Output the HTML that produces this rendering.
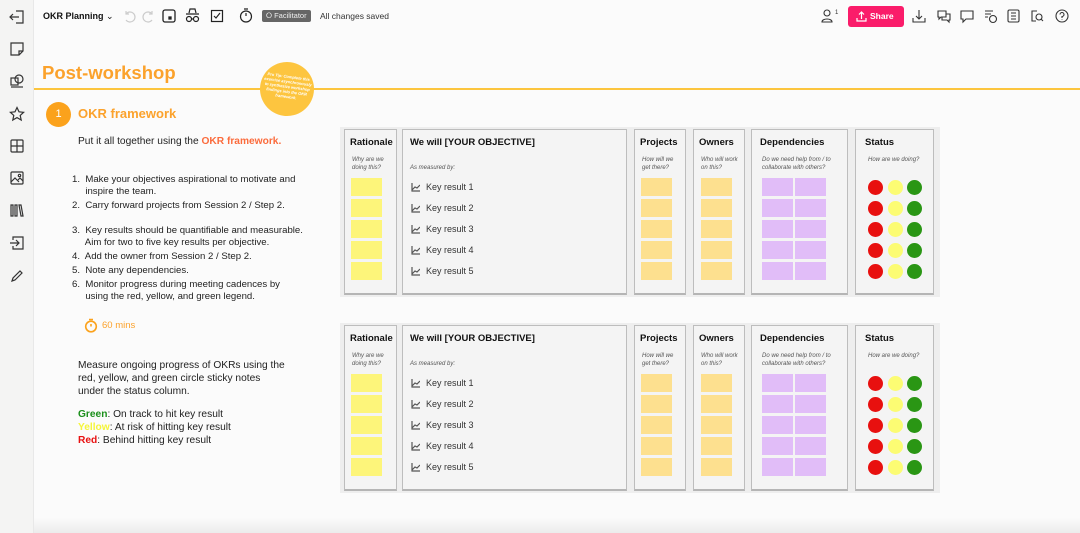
<!DOCTYPE html>
<html><head><meta charset="utf-8"><style>
*{margin:0;padding:0;box-sizing:border-box}
body{width:1080px;height:533px;overflow:hidden;background:#fbfbfb;font-family:"Liberation Sans",sans-serif;color:#222;position:relative}
.a{position:absolute}
.side{left:0;top:0;width:34px;height:533px;background:#f4f4f3;border-right:1px solid #e8e8e8}
.side svg{position:absolute;left:9px}
.board{position:absolute;left:340px;width:600px;height:170px;background:#eeeeee}
.col{position:absolute;top:2px;height:166px;background:#f4f4f4;border:1px solid #bdbdbd;border-bottom:2px solid #b5b5b5}
.col h4{position:absolute;left:5px;top:7px;font-size:9.5px;font-weight:bold;color:#111;white-space:nowrap}
.col i{position:absolute;left:7px;top:26px;font-size:6px;line-height:8px;color:#555}
.st{position:absolute;width:31px;height:18px}
.y{background:#fdf57a}.o{background:#fde08f}.p{background:#e1bdf8}
.c{position:absolute;width:15px;height:15px;border-radius:50%}
.kr{position:absolute;left:8px;font-size:9px;color:#333;white-space:nowrap}
.kr svg{vertical-align:-2px;margin-right:6px}
.txt{font-size:9.6px;line-height:12px;color:#222}
</style></head><body>
<div class="a side">
<svg style="top:9px" width="16" height="16" viewBox="0 0 16 16" fill="none" stroke="#333" stroke-width="1.2"><path d="M7 2h7v12H7M1 8h9M4 5L1 8l3 3"/></svg>
<svg style="top:41px" width="16" height="16" viewBox="0 0 16 16" fill="none" stroke="#333" stroke-width="1.2"><path d="M2 2h12v8l-4 4H2z M10 14v-4h4"/></svg>
<svg style="top:73px" width="16" height="16" viewBox="0 0 16 16" fill="none" stroke="#333" stroke-width="1.2"><rect x="2" y="5" width="7" height="7"/><circle cx="10" cy="6" r="4"/><path d="M2 14h12"/></svg>
<svg style="top:106px" width="16" height="16" viewBox="0 0 16 16" fill="none" stroke="#333" stroke-width="1.2"><path d="M8 1.5l2 4.3 4.6.5-3.4 3.1 1 4.6L8 11.6 3.8 14l1-4.6L1.4 6.3 6 5.8z"/></svg>
<svg style="top:138px" width="16" height="16" viewBox="0 0 16 16" fill="none" stroke="#333" stroke-width="1.2"><rect x="2" y="2" width="12" height="12" rx="1"/><path d="M8 2v12M2 8h12"/></svg>
<svg style="top:170px" width="16" height="16" viewBox="0 0 16 16" fill="none" stroke="#333" stroke-width="1.2"><rect x="2" y="2" width="12" height="12" rx="1"/><path d="M2 12l4-4 4 4M9 10l2-2 3 3"/><circle cx="10.5" cy="5.5" r="1.2"/></svg>
<svg style="top:202px" width="16" height="16" viewBox="0 0 16 16" fill="none" stroke="#333" stroke-width="1.2"><path d="M2 3h2v11H2zM6 3h2v11H6zM10 3l2 0 2 11h-2z"/></svg>
<svg style="top:235px" width="16" height="16" viewBox="0 0 16 16" fill="none" stroke="#333" stroke-width="1.2"><path d="M4 5V2h10v12H4v-3M1 8h9M7 5l3 3-3 3"/></svg>
<svg style="top:268px" width="16" height="16" viewBox="0 0 16 16" fill="none" stroke="#333" stroke-width="1.2"><path d="M3 13l1-3 7-7 2 2-7 7z"/></svg>
</div>
<!-- top bar -->
<div class="a" style="left:43px;top:11px;font-size:9px;font-weight:bold;color:#111">OKR Planning <span style="font-weight:normal">⌄</span></div>
<svg class="a" style="left:122px;top:10px" width="34" height="14" viewBox="0 0 34 14" fill="none" stroke="#ccc" stroke-width="1.2"><path d="M4 4a5 5 0 1 1 0 6M4 1v3h3M30 4a5 5 0 1 0 0 6M30 1v3h-3"/></svg>
<svg class="a" style="left:162px;top:9px" width="14" height="14" viewBox="0 0 14 14" fill="none" stroke="#222" stroke-width="1.3"><rect x="1" y="1" width="12" height="12" rx="2"/><rect x="7" y="8" width="2" height="2" fill="#222"/></svg>
<svg class="a" style="left:185px;top:8px" width="15" height="15" viewBox="0 0 15 15" fill="none" stroke="#222" stroke-width="1.2"><path d="M4 5l1-4h5l1 4M1 6h13"/><circle cx="4" cy="11" r="2.5"/><circle cx="11" cy="11" r="2.5"/><path d="M6.5 11h2"/></svg>
<svg class="a" style="left:210px;top:9px" width="14" height="14" viewBox="0 0 14 14" fill="none" stroke="#222" stroke-width="1.2"><rect x="1.5" y="1.5" width="11" height="11"/><path d="M4 7l2 2 4-5"/></svg>
<svg class="a" style="left:239px;top:8px" width="14" height="15" viewBox="0 0 14 15" fill="none" stroke="#222" stroke-width="1.2"><circle cx="7" cy="8.5" r="5.5"/><path d="M5 1h4M7 5v3"/></svg>
<div class="a" style="left:262px;top:10px;width:49px;height:12px;background:#666;border-radius:2px;color:#eee;font-size:7.5px;line-height:12px;padding-left:4px">⭘ Facilitator</div>
<div class="a" style="left:320px;top:11px;font-size:8.5px;color:#333">All changes saved</div>
<svg class="a" style="left:821px;top:9px" width="16" height="14" viewBox="0 0 16 14" fill="none" stroke="#333" stroke-width="1.1"><circle cx="6" cy="4" r="3"/><path d="M1 13c0-4 10-4 10 0z"/></svg>
<div class="a" style="left:835px;top:10px;font-size:6px;color:#333">1</div>
<div class="a" style="left:848px;top:6px;width:56px;height:21px;background:#fa1c6a;border-radius:3px;color:#fff;font-size:8.5px;font-weight:bold;line-height:21px;padding-left:22px">Share</div>
<svg class="a" style="left:856px;top:11px" width="11" height="11" viewBox="0 0 11 11" fill="none" stroke="#fff" stroke-width="1.2"><path d="M1 7v3h9V7M5.5 8V1M3 3.5l2.5-2.5 2.5 2.5"/></svg>
<svg class="a" style="left:912px;top:8px" width="160" height="16" viewBox="0 0 160 16" fill="none" stroke="#333" stroke-width="1.1">
<path d="M1 10v4h12v-4M7 2v9M4 8l3 3 3-3"/>
<path d="M26 3h8v6h-5l-2 2V9h-1zM30 9v3h5l2 2v-2h1V6h-4"/>
<path d="M49 3h12v8h-7l-3 3v-3h-2z"/>
<path d="M73 3h8M73 6h6M73 9h3"/><circle cx="81" cy="11" r="3.5"/>
<rect x="96" y="2" width="11" height="12" rx="1.5"/><path d="M99 5h5M99 8h5M99 11h5"/>
<path d="M125 3h-5v10h4"/><circle cx="127" cy="9" r="3"/><path d="M129 11l2 2"/>
<circle cx="150" cy="8" r="6"/><path d="M148 6.5a2 2 0 1 1 2 2v1.5M150 11.5v.5"/>
</svg>
<!-- header -->
<div class="a" style="left:42px;top:62px;font-size:18.5px;font-weight:bold;color:#fba22c">Post-workshop</div>
<div class="a" style="left:34px;top:88px;width:1046px;height:1.5px;background:#fcc53e"></div>
<div class="a" style="left:260px;top:62px;width:54px;height:54px;border-radius:50%;background:#fdc53f;color:#fff;font-size:4px;line-height:5px;text-align:center;padding-top:12px;font-style:italic;font-weight:bold;transform:rotate(8deg)">Pro Tip: Complete this<br>exercise asynchronously<br>to synthesize workshop<br>findings into the OKR<br>framework.</div>
<div class="a" style="left:46px;top:102px;width:25px;height:25px;border-radius:50%;background:#fba21c;color:#fff;font-size:11px;text-align:center;line-height:25px">1</div>
<div class="a" style="left:78px;top:106px;font-size:13px;font-weight:bold;color:#fba22c">OKR framework</div>
<div class="a txt" style="left:78px;top:136px;font-size:10.2px">Put it all together using the <b style="color:#fb6b3c">OKR framework.</b></div>
<div class="a txt" style="left:72px;top:174px;width:260px;font-size:9.6px">
<div>1.&nbsp; Make your objectives aspirational to motivate and<br>&nbsp;&nbsp;&nbsp;&nbsp; inspire the team.</div>
<div style="margin-top:2px">2.&nbsp; Carry forward projects from Session 2 / Step 2.</div>
<div style="margin-top:13px">3.&nbsp; Key results should be quantifiable and measurable.<br>&nbsp;&nbsp;&nbsp;&nbsp; Aim for two to five key results per objective.</div>
<div style="margin-top:2px">4.&nbsp; Add the owner from Session 2 / Step 2.</div>
<div style="margin-top:2px">5.&nbsp; Note any dependencies.</div>
<div style="margin-top:2px">6.&nbsp; Monitor progress during meeting cadences by<br>&nbsp;&nbsp;&nbsp;&nbsp; using the red, yellow, and green legend.</div>
</div>
<svg class="a" style="left:84px;top:318px" width="14" height="15" viewBox="0 0 14 15" fill="none" stroke="#fba21c" stroke-width="1.6"><circle cx="7" cy="8.5" r="5.3"/><path d="M5 1.5h4M7 6v2.5"/></svg>
<div class="a" style="left:102px;top:320px;font-size:9.5px;color:#fba22c">60 mins</div>
<div class="a txt" style="left:78px;top:359px;line-height:13px;font-size:10.2px">Measure ongoing progress of OKRs using the<br>red, yellow, and green circle sticky notes<br>under the status column.</div>
<div class="a txt" style="left:78px;top:409px;line-height:12.8px;font-size:10.2px"><b style="color:#1b8f1b">Green</b>: On track to hit key result<br><b style="color:#f5f53a">Yellow</b>: At risk of hitting key result<br><b style="color:#e81010">Red</b>: Behind hitting key result</div>

<!-- boards -->
<div class="board" style="top:127px">
 <div class="col" style="left:4px;width:53px"><h4>Rationale</h4><i>Why are we<br>doing this?</i>
  <div class="st y" style="left:6px;top:48px"></div><div class="st y" style="left:6px;top:69px"></div><div class="st y" style="left:6px;top:90px"></div><div class="st y" style="left:6px;top:111px"></div><div class="st y" style="left:6px;top:132px"></div></div>
 <div class="col" style="left:62px;width:225px"><h4 style="left:7px">We will [YOUR OBJECTIVE]</h4><i style="top:34px">As measured by:</i>
  <div class="kr" style="top:52px"><svg width="9" height="9" viewBox="0 0 9 9" fill="none" stroke="#555" stroke-width="1.2"><path d="M1 0v8h8M1 7l3-3 2 1 3-3"/></svg>Key result 1</div>
  <div class="kr" style="top:73px"><svg width="9" height="9" viewBox="0 0 9 9" fill="none" stroke="#555" stroke-width="1.2"><path d="M1 0v8h8M1 7l3-3 2 1 3-3"/></svg>Key result 2</div>
  <div class="kr" style="top:94px"><svg width="9" height="9" viewBox="0 0 9 9" fill="none" stroke="#555" stroke-width="1.2"><path d="M1 0v8h8M1 7l3-3 2 1 3-3"/></svg>Key result 3</div>
  <div class="kr" style="top:115px"><svg width="9" height="9" viewBox="0 0 9 9" fill="none" stroke="#555" stroke-width="1.2"><path d="M1 0v8h8M1 7l3-3 2 1 3-3"/></svg>Key result 4</div>
  <div class="kr" style="top:136px"><svg width="9" height="9" viewBox="0 0 9 9" fill="none" stroke="#555" stroke-width="1.2"><path d="M1 0v8h8M1 7l3-3 2 1 3-3"/></svg>Key result 5</div></div>
 <div class="col" style="left:294px;width:52px"><h4>Projects</h4><i>How will we<br>get there?</i>
  <div class="st o" style="left:6px;top:48px"></div><div class="st o" style="left:6px;top:69px"></div><div class="st o" style="left:6px;top:90px"></div><div class="st o" style="left:6px;top:111px"></div><div class="st o" style="left:6px;top:132px"></div></div>
 <div class="col" style="left:353px;width:52px"><h4>Owners</h4><i>Who will work<br>on this?</i>
  <div class="st o" style="left:7px;top:48px"></div><div class="st o" style="left:7px;top:69px"></div><div class="st o" style="left:7px;top:90px"></div><div class="st o" style="left:7px;top:111px"></div><div class="st o" style="left:7px;top:132px"></div></div>
 <div class="col" style="left:411px;width:97px"><h4 style="left:8px">Dependencies</h4><i style="left:10px">Do we need help from / to<br>collaborate with others?</i>
  <div class="st p" style="left:10px;top:48px"></div><div class="st p" style="left:10px;top:69px"></div><div class="st p" style="left:10px;top:90px"></div><div class="st p" style="left:10px;top:111px"></div><div class="st p" style="left:10px;top:132px"></div>
  <div class="st p" style="left:43px;top:48px"></div><div class="st p" style="left:43px;top:69px"></div><div class="st p" style="left:43px;top:90px"></div><div class="st p" style="left:43px;top:111px"></div><div class="st p" style="left:43px;top:132px"></div></div>
 <div class="col" style="left:515px;width:79px"><h4 style="left:9px">Status</h4><i style="left:12px">How are we doing?</i>
  <div class="c" style="left:12px;top:50px;background:#e8100f"></div><div class="c" style="left:32px;top:50px;background:#fcfc73"></div><div class="c" style="left:51px;top:50px;background:#2a9614"></div>
  <div class="c" style="left:12px;top:71px;background:#e8100f"></div><div class="c" style="left:32px;top:71px;background:#fcfc73"></div><div class="c" style="left:51px;top:71px;background:#2a9614"></div>
  <div class="c" style="left:12px;top:92px;background:#e8100f"></div><div class="c" style="left:32px;top:92px;background:#fcfc73"></div><div class="c" style="left:51px;top:92px;background:#2a9614"></div>
  <div class="c" style="left:12px;top:113px;background:#e8100f"></div><div class="c" style="left:32px;top:113px;background:#fcfc73"></div><div class="c" style="left:51px;top:113px;background:#2a9614"></div>
  <div class="c" style="left:12px;top:134px;background:#e8100f"></div><div class="c" style="left:32px;top:134px;background:#fcfc73"></div><div class="c" style="left:51px;top:134px;background:#2a9614"></div></div>
</div>

<div class="board" style="top:323px">
 <div class="col" style="left:4px;width:53px"><h4>Rationale</h4><i>Why are we<br>doing this?</i>
  <div class="st y" style="left:6px;top:48px"></div><div class="st y" style="left:6px;top:69px"></div><div class="st y" style="left:6px;top:90px"></div><div class="st y" style="left:6px;top:111px"></div><div class="st y" style="left:6px;top:132px"></div></div>
 <div class="col" style="left:62px;width:225px"><h4 style="left:7px">We will [YOUR OBJECTIVE]</h4><i style="top:34px">As measured by:</i>
  <div class="kr" style="top:52px"><svg width="9" height="9" viewBox="0 0 9 9" fill="none" stroke="#555" stroke-width="1.2"><path d="M1 0v8h8M1 7l3-3 2 1 3-3"/></svg>Key result 1</div>
  <div class="kr" style="top:73px"><svg width="9" height="9" viewBox="0 0 9 9" fill="none" stroke="#555" stroke-width="1.2"><path d="M1 0v8h8M1 7l3-3 2 1 3-3"/></svg>Key result 2</div>
  <div class="kr" style="top:94px"><svg width="9" height="9" viewBox="0 0 9 9" fill="none" stroke="#555" stroke-width="1.2"><path d="M1 0v8h8M1 7l3-3 2 1 3-3"/></svg>Key result 3</div>
  <div class="kr" style="top:115px"><svg width="9" height="9" viewBox="0 0 9 9" fill="none" stroke="#555" stroke-width="1.2"><path d="M1 0v8h8M1 7l3-3 2 1 3-3"/></svg>Key result 4</div>
  <div class="kr" style="top:136px"><svg width="9" height="9" viewBox="0 0 9 9" fill="none" stroke="#555" stroke-width="1.2"><path d="M1 0v8h8M1 7l3-3 2 1 3-3"/></svg>Key result 5</div></div>
 <div class="col" style="left:294px;width:52px"><h4>Projects</h4><i>How will we<br>get there?</i>
  <div class="st o" style="left:6px;top:48px"></div><div class="st o" style="left:6px;top:69px"></div><div class="st o" style="left:6px;top:90px"></div><div class="st o" style="left:6px;top:111px"></div><div class="st o" style="left:6px;top:132px"></div></div>
 <div class="col" style="left:353px;width:52px"><h4>Owners</h4><i>Who will work<br>on this?</i>
  <div class="st o" style="left:7px;top:48px"></div><div class="st o" style="left:7px;top:69px"></div><div class="st o" style="left:7px;top:90px"></div><div class="st o" style="left:7px;top:111px"></div><div class="st o" style="left:7px;top:132px"></div></div>
 <div class="col" style="left:411px;width:97px"><h4 style="left:8px">Dependencies</h4><i style="left:10px">Do we need help from / to<br>collaborate with others?</i>
  <div class="st p" style="left:10px;top:48px"></div><div class="st p" style="left:10px;top:69px"></div><div class="st p" style="left:10px;top:90px"></div><div class="st p" style="left:10px;top:111px"></div><div class="st p" style="left:10px;top:132px"></div>
  <div class="st p" style="left:43px;top:48px"></div><div class="st p" style="left:43px;top:69px"></div><div class="st p" style="left:43px;top:90px"></div><div class="st p" style="left:43px;top:111px"></div><div class="st p" style="left:43px;top:132px"></div></div>
 <div class="col" style="left:515px;width:79px"><h4 style="left:9px">Status</h4><i style="left:12px">How are we doing?</i>
  <div class="c" style="left:12px;top:50px;background:#e8100f"></div><div class="c" style="left:32px;top:50px;background:#fcfc73"></div><div class="c" style="left:51px;top:50px;background:#2a9614"></div>
  <div class="c" style="left:12px;top:71px;background:#e8100f"></div><div class="c" style="left:32px;top:71px;background:#fcfc73"></div><div class="c" style="left:51px;top:71px;background:#2a9614"></div>
  <div class="c" style="left:12px;top:92px;background:#e8100f"></div><div class="c" style="left:32px;top:92px;background:#fcfc73"></div><div class="c" style="left:51px;top:92px;background:#2a9614"></div>
  <div class="c" style="left:12px;top:113px;background:#e8100f"></div><div class="c" style="left:32px;top:113px;background:#fcfc73"></div><div class="c" style="left:51px;top:113px;background:#2a9614"></div>
  <div class="c" style="left:12px;top:134px;background:#e8100f"></div><div class="c" style="left:32px;top:134px;background:#fcfc73"></div><div class="c" style="left:51px;top:134px;background:#2a9614"></div></div>
</div>
<div class="a" style="left:34px;top:518px;width:1046px;height:15px;background:linear-gradient(#fbfbfb,#ececec)"></div>
</body></html>
